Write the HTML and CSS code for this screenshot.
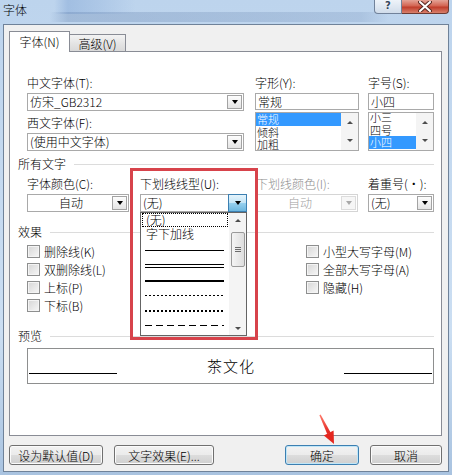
FILE: index.html
```html
<!DOCTYPE html>
<html lang="zh-CN">
<head>
    <meta charset="UTF-8">
    <title>字体</title>
    <link rel="stylesheet" href="styles.css">
</head>
<body>
    <div class="window">
        <div class="titlebar">
            <span class="title">字体</span>
            <div class="caption-btns">
                <span class="btn-help">?</span>
                <span class="btn-close">
                    <svg width="14" height="11" viewBox="0 0 14 11">
                        <path d="M2 1 L12 10 M12 1 L2 10" stroke="#5a2a24" stroke-width="4" stroke-linecap="round"/>
                        <path d="M2 1 L12 10 M12 1 L2 10" stroke="#fff" stroke-width="2" stroke-linecap="round"/>
                    </svg>
                </span>
            </div>
        </div>

        <div class="client">
            <!-- Onglets -->
            <div class="tabs">
                <div class="tab active">字体(N)</div>
                <div class="tab">高级(V)</div>
            </div>

            <div class="panel">
                <!-- Polices -->
                <div class="row">
                    <div class="field w-font">
                        <div class="lbl">中文字体(T):</div>
                        <div class="combo"><span class="val">仿宋_GB2312</span><span class="drop"></span></div>
                        <div class="lbl lbl-gap">西文字体(F):</div>
                        <div class="combo"><span class="val">(使用中文字体)</span><span class="drop"></span></div>
                    </div>
                    <div class="field w-style">
                        <div class="lbl">字形(Y):</div>
                        <div class="textbox">常规</div>
                        <div class="listbox">
                            <div class="items">
                                <div class="item sel">常规</div>
                                <div class="item">倾斜</div>
                                <div class="item">加粗</div>
                            </div>
                            <div class="sbar"><span class="arr up"></span><span class="arr down"></span></div>
                        </div>
                    </div>
                    <div class="field w-size">
                        <div class="lbl">字号(S):</div>
                        <div class="textbox">小四</div>
                        <div class="listbox">
                            <div class="items shifted">
                                <div class="item">小三</div>
                                <div class="item">四号</div>
                                <div class="item sel">小四</div>
                            </div>
                            <div class="sbar"><span class="arr up"></span><span class="arr down"></span></div>
                        </div>
                    </div>
                </div>

                <div class="group-title g-all">所有文字</div>

                <div class="row row-color">
                    <div class="field w-color">
                        <div class="lbl">字体颜色(C):</div>
                        <div class="combo"><span class="val center">自动</span><span class="drop"></span></div>
                    </div>
                    <div class="field w-uline">
                        <div class="lbl">下划线线型(U):</div>
                        <div class="combo open"><span class="val">(无)</span><span class="drop"></span></div>
                    </div>
                    <div class="field w-ucolor">
                        <div class="lbl muted">下划线颜色(I):</div>
                        <div class="combo disabled"><span class="val center">自动</span><span class="drop"></span></div>
                    </div>
                    <div class="field w-emph">
                        <div class="lbl">着重号(·):</div>
                        <div class="combo"><span class="val">(无)</span><span class="drop"></span></div>
                    </div>
                </div>

                <div class="group-title g-fx">效果</div>

                <div class="effects">
                    <div class="fx-col left">
                        <div class="check-row"><span class="box"></span>删除线(K)</div>
                        <div class="check-row"><span class="box"></span>双删除线(L)</div>
                        <div class="check-row"><span class="box"></span>上标(P)</div>
                        <div class="check-row"><span class="box"></span>下标(B)</div>
                    </div>
                    <div class="fx-col">
                        <div class="check-row"><span class="box"></span>小型大写字母(M)</div>
                        <div class="check-row"><span class="box"></span>全部大写字母(A)</div>
                        <div class="check-row"><span class="box"></span>隐藏(H)</div>
                    </div>
                </div>

                <div class="group-title g-prev">预览</div>

                <div class="preview">
                    <span class="pline"></span>
                    <span class="ptext">茶文化</span>
                    <span class="pline"></span>
                </div>

                <!-- Liste déroulante ouverte -->
                <div class="dropdown">
                    <div class="dd-items">
                        <div class="dd-item focus">(无)</div>
                        <div class="dd-item words">字下加线</div>
                        <div class="dd-line"><span class="ln single"></span></div>
                        <div class="dd-line"><span class="ln double"></span></div>
                        <div class="dd-line"><span class="ln thick"></span></div>
                        <div class="dd-line"><span class="ln dots"></span></div>
                        <div class="dd-line"><span class="ln dots-heavy"></span></div>
                        <div class="dd-line"><span class="ln dash"></span></div>
                    </div>
                    <div class="dd-sbar">
                        <span class="dd-btn"><span class="arr up"></span></span>
                        <span class="thumb"><span class="grip"></span></span>
                        <span class="dd-btn bottom"><span class="arr down"></span></span>
                    </div>
                </div>

                <!-- Cadre rouge -->
                <div class="mark"></div>
            </div>

            <div class="buttons">
                <div class="btn b-default">设为默认值(D)</div>
                <div class="btn b-effects">文字效果(E)...</div>
                <div class="btn b-ok">确定</div>
                <div class="btn b-cancel">取消</div>
            </div>
        </div>

        <svg class="arrow" width="24" height="36" viewBox="0 0 24 36">
            <defs>
                <linearGradient id="ar" x1="0" y1="0" x2="0" y2="1">
                    <stop offset="0" stop-color="#ff7b6b"/>
                    <stop offset="1" stop-color="#e0201c"/>
                </linearGradient>
            </defs>
            <polygon points="3.4,3.2 4.6,2.6 14.6,20.4 11.2,22" fill="url(#ar)"/>
            <polygon points="18,32 17.6,18.6 7.8,23.6" fill="#e4261f"/>
        </svg>
    </div>
</body>
</html>
```

FILE: styles.css
```css
body {
    margin: 0;
    width: 452px;
    height: 475px;
    overflow: hidden;
    font-family: "Noto Sans CJK SC", "Noto Sans", sans-serif;
    font-size: 12px;
    font-weight: 300;
    color: #000;
    background: linear-gradient(#bdd4ed, #cbdef2 70%, #a9c3e0);
}

.window {
    position: relative;
    height: 475px;
}

/* Barre de titre */
.titlebar {
    display: flex;
    align-items: flex-start;
    height: 24px;
    background:
        linear-gradient(90deg, rgba(90, 120, 165, 0) 11%, rgba(90, 120, 165, .28) 15%, rgba(90, 120, 165, .22) 60%, rgba(90, 120, 165, .18) 80%, rgba(90, 120, 165, 0) 86%) 0 12px / 100% 10px no-repeat,
        linear-gradient(90deg, rgba(255, 255, 255, 0) 12%, rgba(110, 150, 205, .35) 15%, rgba(110, 150, 205, .2) 22%, rgba(255, 255, 255, 0) 30%) 0 0 / 100% 14px no-repeat;
}

.title {
    padding: 2px 0 0 3px;
    line-height: 16px;
}

.caption-btns {
    display: flex;
    margin-left: auto;
    margin-right: 3px;
}

.btn-help {
    width: 28px;
    height: 14px;
    box-sizing: border-box;
    border: 1px solid #71829a;
    border-top: none;
    border-radius: 0 0 0 4px;
    background: linear-gradient(#eef3f9, #d0dcea);
    color: #34465c;
    font-family: "DejaVu Sans", sans-serif;
    font-weight: bold;
    font-size: 10px;
    line-height: 12px;
    text-align: center;
    text-shadow: 0 0 2px #fff;
}

.btn-close {
    width: 47px;
    height: 14px;
    box-sizing: border-box;
    border: 1px solid #6d3b33;
    border-top: none;
    border-left: none;
    border-radius: 0 0 4px 0;
    background: linear-gradient(#e4a396, #d36452 45%, #c03d2b 55%, #d8806c);
    display: flex;
    align-items: center;
    justify-content: center;
}

/* Zone cliente */
.client {
    height: 448px;
    margin: 0 3px;
    box-sizing: border-box;
    border: 1px solid #6f8299;
    background: #f0f0f0;
    padding: 6px 6px 0 5px;
}

.tabs {
    display: flex;
    align-items: flex-end;
    height: 20px;
}

.tab {
    box-sizing: border-box;
    height: 17px;
    width: 56px;
    border: 1px solid #898c95;
    border-left: none;
    border-bottom: none;
    background: linear-gradient(#f3f3f3, #e5e5e5 50%, #d9d9d9);
    display: flex;
    align-items: center;
    justify-content: center;
    line-height: 15px;
}

.tab.active {
    position: relative;
    z-index: 1;
    width: 61px;
    height: 21px;
    margin-bottom: -1px;
    border-left: 1px solid #898c95;
    background: #fff;
    padding-bottom: 1px;
}

.panel {
    position: relative;
    height: 385px;
    box-sizing: border-box;
    border: 1px solid #898c95;
    background: #fff;
    padding: 23px 7px 0 17px;
}

.row {
    display: flex;
}

.lbl {
    height: 15px;
    line-height: 15px;
    white-space: nowrap;
}

.lbl.muted {
    color: #8d8d8d;
}

.lbl-gap {
    margin-top: 4px;
}

.w-font { width: 217px; }
.w-style { width: 104px; margin-left: 11px; }
.w-size { width: 66px; margin-left: 9px; }

.w-color { width: 102px; }
.w-uline { width: 107px; margin-left: 11px; }
.w-ucolor { width: 102px; margin-left: 9px; }
.w-emph { width: 66px; margin-left: 10px; }

/* Listes déroulantes */
.combo {
    display: flex;
    align-items: center;
    height: 18px;
    margin-top: 3px;
    box-sizing: border-box;
    border: 1px solid #a9a9a9;
    background: #fff;
}

.combo .val {
    flex: 1;
    padding-left: 2px;
    line-height: 16px;
    white-space: nowrap;
    overflow: hidden;
}

.combo .val.center {
    text-align: center;
}

.drop {
    display: flex;
    align-items: center;
    justify-content: center;
    width: 15px;
    height: 14px;
    margin-right: 1px;
    box-sizing: border-box;
    border: 1px solid #a3a3a3;
    background: linear-gradient(#fdfdfd, #e4e4e4);
}

.drop::before {
    content: "";
    border-left: 3px solid transparent;
    border-right: 3px solid transparent;
    border-top: 4px solid #000;
}

.combo.open .drop {
    width: 19px;
    height: 18px;
    margin: -1px -1px -1px 0;
    border-color: #3c7fb1;
    background: linear-gradient(#e5f4fc, #c4e5f6 50%, #98d1ef 50%, #6db7df);
}

.combo.disabled {
    border-color: #d5d5d5;
    color: #a0a0a0;
}

.combo.disabled .drop {
    border-color: #dcdcdc;
    background: #f6f6f6;
}

.combo.disabled .drop::before {
    border-top-color: #a8a8a8;
}

.textbox {
    height: 17px;
    margin-top: 3px;
    box-sizing: border-box;
    border: 1px solid #a9a9a9;
    padding-left: 2px;
    line-height: 15px;
}

.listbox {
    display: flex;
    height: 39px;
    margin-top: 2px;
    box-sizing: border-box;
    border: 1px solid #a9a9a9;
    overflow: hidden;
}

.items {
    flex: 1;
    overflow: hidden;
}

.items.shifted {
    margin-top: -2px;
}

.item {
    height: 12.5px;
    line-height: 12.5px;
    font-size: 11px;
    padding-left: 1px;
}

.item.sel {
    background: #3399ff;
    color: #fff;
}

.sbar {
    width: 17px;
    display: flex;
    flex-direction: column;
    justify-content: space-around;
    align-items: center;
    background: #f4f4f4;
}

.arr {
    display: block;
    width: 0;
    height: 0;
    border-left: 3px solid transparent;
    border-right: 3px solid transparent;
}

.arr.up { border-bottom: 3px solid #4d4d4d; }
.arr.down { border-top: 3px solid #4d4d4d; }

/* Titres de groupes */
.group-title {
    display: flex;
    align-items: center;
    gap: 8px;
    height: 14px;
    margin-left: -9px;
    line-height: 14px;
}

.group-title::after {
    content: "";
    flex: 1;
    border-top: 1px solid #dcdcdc;
}

.g-all { margin-top: 6px; }
.g-fx { margin-top: 13px; }
.g-prev { margin-top: 15px; }

.row-color {
    margin-top: 5px;
}

/* Effets */
.effects {
    display: flex;
    margin-top: 3px;
}

.fx-col {
    display: flex;
    flex-direction: column;
}

.fx-col.left {
    width: 279px;
}

.check-row {
    display: flex;
    align-items: center;
    gap: 4px;
    height: 18px;
    white-space: nowrap;
}

.box {
    width: 13px;
    height: 13px;
    box-sizing: border-box;
    border: 1px solid #8e8f8f;
    background: linear-gradient(135deg, #d6d6d6, #f7f7f7);
    box-shadow: inset 0 0 0 1px #f4f4f4;
}

/* Aperçu */
.preview {
    display: flex;
    align-items: center;
    height: 36px;
    margin-top: 5px;
    box-sizing: border-box;
    border: 1px solid #8e8f8f;
    padding: 0 1px;
}

.pline {
    width: 88px;
    margin-top: 14px;
    border-top: 1px solid #000;
}

.ptext {
    flex: 1;
    text-align: center;
    font-size: 15px;
    letter-spacing: 1px;
    line-height: 20px;
    padding-left: 1px;
}

/* Liste ouverte du soulignement */
.dropdown {
    position: absolute;
    left: 130px;
    top: 160px;
    width: 107px;
    height: 124px;
    box-sizing: border-box;
    border: 1px solid #646464;
    background: #fff;
    display: flex;
}

.dd-items {
    flex: 1;
}

.dd-item {
    height: 14px;
    line-height: 12px;
    box-sizing: border-box;
}

.dd-item.focus {
    margin: 0 1px;
    border: 1px dotted #000;
    padding-left: 3px;
}

.dd-item.words {
    height: 16px;
    padding-left: 5px;
    line-height: 14px;
}

.dd-line {
    display: flex;
    align-items: center;
    height: 15px;
    padding: 0 5px 0 4px;
}

.ln {
    flex: 1;
    box-sizing: border-box;
}

.ln.single { border-top: 1px solid #000; }
.ln.double { height: 4px; border-top: 1px solid #000; border-bottom: 1px solid #000; }
.ln.thick { border-top: 2px solid #000; }
.ln.dots { height: 1px; background: repeating-linear-gradient(90deg, #000 0 2px, transparent 2px 4px); }
.ln.dots-heavy { height: 2px; background: repeating-linear-gradient(90deg, #000 0 2px, transparent 2px 4px); }
.ln.dash { height: 1px; background: repeating-linear-gradient(90deg, #000 0 7px, transparent 7px 11px); }

.dd-sbar {
    width: 17px;
    display: flex;
    flex-direction: column;
    align-items: center;
    background: #f4f4f4;
}

.dd-btn {
    display: flex;
    align-items: center;
    justify-content: center;
    width: 17px;
    height: 14px;
}

.dd-btn.bottom {
    margin-top: auto;
}

.thumb {
    display: flex;
    align-items: center;
    justify-content: center;
    width: 14px;
    height: 35px;
    margin-top: 5px;
    box-sizing: border-box;
    border: 1px solid #9a9a9a;
    border-radius: 2px;
    background: linear-gradient(90deg, #f4f4f4, #dedede);
}

.grip {
    width: 6px;
    height: 5px;
    background: repeating-linear-gradient(#6b6b6b 0 1px, transparent 1px 2px);
}

/* Cadre d'annotation */
.mark {
    position: absolute;
    left: 120px;
    top: 116px;
    width: 128px;
    height: 172px;
    box-sizing: border-box;
    border: 3px solid #d7434b;
}

/* Boutons du bas */
.buttons {
    display: flex;
    margin-top: 9px;
}

.btn {
    display: flex;
    align-items: center;
    justify-content: center;
    height: 20px;
    box-sizing: border-box;
    border: 1px solid #707070;
    border-radius: 3px;
    background: linear-gradient(#f2f2f2, #ebebeb 50%, #dddddd 50%, #cfcfcf);
    box-shadow: inset 0 0 0 1px #fbfbfb;
    white-space: nowrap;
}

.b-default { width: 94px; }
.b-effects { width: 100px; margin-left: 11px; }
.b-ok {
    width: 74px;
    margin-left: auto;
    border-color: #3c7fb1;
    box-shadow: inset 0 0 0 1px #bfe6f8;
}
.b-cancel { width: 72px; margin-left: 11px; }

.arrow {
    position: absolute;
    left: 316px;
    top: 412px;
}
```
